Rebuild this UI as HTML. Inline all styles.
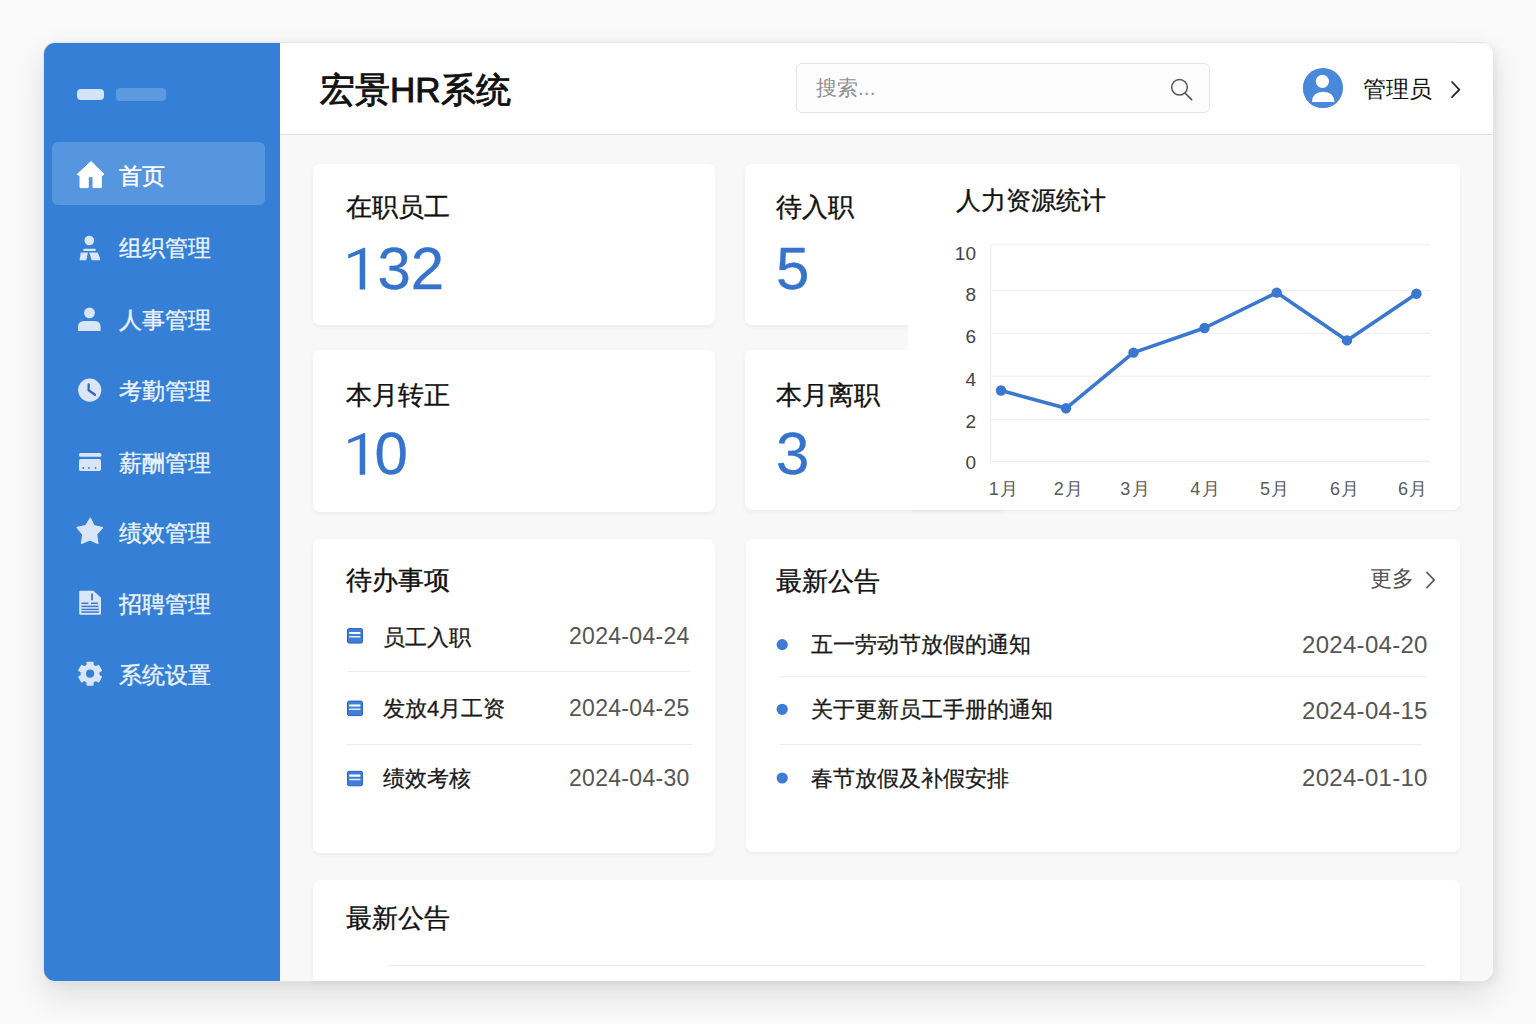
<!DOCTYPE html>
<html><head><meta charset="utf-8">
<style>
*{box-sizing:border-box;margin:0;padding:0}
html,body{width:1536px;height:1024px;overflow:hidden;background:#fafafa;font-family:"Liberation Sans",sans-serif;color:#111;position:relative}
.a{position:absolute;white-space:nowrap}
#win{position:absolute;left:43px;top:42px;width:1451px;height:940px;border-radius:12px;background:#f8f8f8;border:1px solid #e4e4e4;box-shadow:0 14px 34px rgba(0,0,0,0.11),3px 2px 10px rgba(0,0,0,0.05)}
#side{position:absolute;left:44px;top:43px;width:236px;height:938px;background:#3580d6;border-radius:11px 0 0 11px}
#head{position:absolute;left:280px;top:43px;width:1213px;height:92px;background:#fff;border-bottom:1px solid #dedede;border-radius:0 11px 0 0}
.mt{position:absolute;left:119px;color:#edf3fc;font-size:23px;line-height:30px;white-space:nowrap;-webkit-text-stroke:0.35px #edf3fc}
.ic{position:absolute}
.card{position:absolute;background:#fff;border-radius:7px;box-shadow:0 2px 4px rgba(0,0,0,0.05)}
.lbl{position:absolute;font-size:25.5px;line-height:30px;white-space:nowrap;color:#111;-webkit-text-stroke:0.35px #111}
.num{position:absolute;font-size:60px;line-height:61px;color:#3573cc;white-space:nowrap;-webkit-text-stroke:0.3px #3573cc}
.it{position:absolute;font-size:22px;line-height:26px;white-space:nowrap;color:#1a1a1a;-webkit-text-stroke:0.3px #1a1a1a}
.dt{position:absolute;font-size:23px;line-height:26px;white-space:nowrap;color:#555;letter-spacing:0.3px}
.g1{color:transparent;-webkit-text-stroke-color:transparent}
.hr{position:absolute;height:1px;background:#ececec}
</style></head><body>
<div id="win"></div>
<div id="side"></div>
<div id="head"></div>

<!-- logo pills -->
<div class="a" style="left:77px;top:89px;width:27px;height:11px;border-radius:4px;background:#d3e3f8"></div>
<div class="a" style="left:116px;top:88px;width:50px;height:13px;border-radius:4px;background:#5b99e0"></div>
<!-- active -->
<div class="a" style="left:52px;top:142px;width:213px;height:63px;border-radius:6px;background:#5596de"></div>

<!-- menu -->
<div class="mt" style="top:161px;color:#fff;-webkit-text-stroke:0.45px #fff">首页</div>
<div class="mt" style="top:233px">组织管理</div>
<div class="mt" style="top:305px">人事管理</div>
<div class="mt" style="top:376px">考勤管理</div>
<div class="mt" style="top:448px">薪酬管理</div>
<div class="mt" style="top:518px">绩效管理</div>
<div class="mt" style="top:589px">招聘管理</div>
<div class="mt" style="top:660px">系统设置</div>

<!-- header -->
<div class="a" style="left:320px;top:68px;font-size:35px;line-height:44px;font-weight:500;color:#111;-webkit-text-stroke:0.9px #111">宏景HR系统</div>
<div class="a" style="left:796px;top:63px;width:414px;height:50px;border:1px solid #e6e6e6;border-radius:6px;background:#fcfcfc"></div>
<div class="a" style="left:816px;top:75px;font-size:21px;line-height:26px;color:#8f8f8f">搜索...</div>
<div class="a" style="left:1303px;top:68px;width:40px;height:40px;border-radius:50%;background:#4a86d8"></div>
<div class="a" style="left:1363px;top:74px;font-size:23px;line-height:30px;color:#111">管理员</div>

<!-- cards row 1/2 -->
<div class="card" style="left:313px;top:164px;width:402px;height:161px"></div>
<div class="card" style="left:313px;top:350px;width:402px;height:162px"></div>
<div class="card" style="left:745px;top:164px;width:260px;height:161px"></div>
<div class="card" style="left:745px;top:350px;width:260px;height:160px"></div>
<div class="card" style="left:908px;top:164px;width:552px;height:346px;border-radius:0 7px 7px 0;box-shadow:2px 3px 3px -2px rgba(0,0,0,0.06)"></div>

<div class="lbl" style="left:346px;top:192px">在职员工</div>
<div class="num" style="left:344px;top:238px"><span class="g1">1</span>32</div>
<div class="lbl" style="left:346px;top:380px">本月转正</div>
<div class="num" style="left:341px;top:423px"><span class="g1">1</span>0</div>
<div class="lbl" style="left:776px;top:192px">待入职</div>
<div class="num" style="left:776px;top:238px">5</div>
<div class="lbl" style="left:776px;top:380px">本月离职</div>
<div class="num" style="left:776px;top:423px">3</div>

<div class="lbl" style="left:956px;top:186px;font-size:24.5px">人力资源统计</div>

<!-- todo -->
<div class="card" style="left:313px;top:539px;width:402px;height:314px"></div>
<div class="lbl" style="left:346px;top:565px">待办事项</div>
<div class="it" style="left:383px;top:625px">员工入职</div>
<div class="dt" style="left:569px;top:623px">2024-04-24</div>
<div class="hr" style="left:348px;top:671px;width:342px"></div>
<div class="it" style="left:383px;top:696px">发放4月工资</div>
<div class="dt" style="left:569px;top:695px">2024-04-25</div>
<div class="hr" style="left:346px;top:744px;width:346px"></div>
<div class="it" style="left:383px;top:766px">绩效考核</div>
<div class="dt" style="left:569px;top:765px">2024-04-30</div>

<!-- announcements -->
<div class="card" style="left:746px;top:539px;width:714px;height:313px"></div>
<div class="lbl" style="left:776px;top:566px">最新公告</div>
<div class="a" style="left:1370px;top:566px;font-size:22px;line-height:26px;color:#555">更多</div>
<div class="it" style="left:811px;top:632px">五一劳动节放假的通知</div>
<div class="dt" style="left:1302px;top:632px;font-size:24px">2024-04-20</div>
<div class="hr" style="left:780px;top:676px;width:646px"></div>
<div class="it" style="left:811px;top:697px">关于更新员工手册的通知</div>
<div class="dt" style="left:1302px;top:698px;font-size:24px">2024-04-15</div>
<div class="hr" style="left:780px;top:744px;width:642px"></div>
<div class="it" style="left:811px;top:766px">春节放假及补假安排</div>
<div class="dt" style="left:1302px;top:765px;font-size:24px">2024-01-10</div>

<!-- bottom card -->
<div class="card" style="left:313px;top:880px;width:1147px;height:101px;border-radius:8px 8px 0 0"></div>
<div class="lbl" style="left:346px;top:903px">最新公告</div>
<div class="hr" style="left:388px;top:965px;width:1038px"></div>


<svg class="a" style="left:0;top:0" width="1536" height="1024" viewBox="0 0 1536 1024">
<!-- sidebar icons -->
<path d="M91,161.5 L104,174.2 L101.3,176 L101.3,187.6 L93,187.6 L93,176.7 L88.2,176.7 L88.2,187.6 L80,187.6 L80,176 L77.3,174.2 Z" fill="#fff" stroke="#fff" stroke-width="1" stroke-linejoin="round"/>
<g fill="#dae6f7">
<circle cx="89.3" cy="240.5" r="4.8"/>
<rect x="83.2" y="248.8" width="12.6" height="2.3" rx="1"/>
<path d="M80.8,252.4 L87.9,252.4 L86.4,260.2 L79.6,260.2 Z"/>
<path d="M89.1,252.4 L97.4,252.4 Q100.2,256 100.2,260.2 L91.8,260.2 Z"/>
<circle cx="89.5" cy="312.9" r="5.4"/>
<path d="M78,331 L78,327 Q78,321 84,321 L94.6,321 Q100.6,321 100.6,327 L100.6,331 Z"/>
<circle cx="89.7" cy="390.1" r="11.6"/>
<rect x="79" y="453" width="22.4" height="3.8" rx="1.6"/>
<rect x="79" y="459" width="22" height="12.1" rx="1.8"/>
<path d="M90.3,518.3 L93.9,525.8 L102.4,527.8 L96.6,534.3 L97.8,543.3 L89.9,539.8 L81.5,543.3 L82.9,534.5 L77.2,527.5 L85.9,525.6 Z" stroke="#dae6f7" stroke-width="1.4" stroke-linejoin="round"/>
<path d="M80.5,590.8 L93.4,590.8 L101,597.8 L101,613.5 Q101,614.8 99.7,614.8 L80.5,614.8 Q79.2,614.8 79.2,613.5 L79.2,592.1 Q79.2,590.8 80.5,590.8 Z"/>
<path d="M86.33,665.97 L87.44,665.00 L87.29,662.44 L92.91,662.44 L92.76,665.00 L93.87,665.97 L94.91,666.57 L96.31,667.04 L98.44,665.64 L101.25,670.50 L98.97,671.65 L98.68,673.10 L98.68,674.30 L98.97,675.75 L101.25,676.90 L98.44,681.76 L96.31,680.36 L94.91,680.83 L93.87,681.43 L92.76,682.40 L92.91,684.96 L87.29,684.96 L87.44,682.40 L86.33,681.43 L85.29,680.83 L83.89,680.36 L81.76,681.76 L78.95,676.90 L81.23,675.75 L81.52,674.30 L81.52,673.10 L81.23,671.65 L78.95,670.50 L81.76,665.64 L83.89,667.04 L85.29,666.57Z" stroke="#dae6f7" stroke-width="1.6" stroke-linejoin="round"/>
</g>
<path d="M88.7,384.3 L88.6,390.2 L95,394.8" fill="none" stroke="#2c68c4" stroke-width="2.3" stroke-linecap="round" stroke-linejoin="round"/>
<g fill="#3a78d0"><circle cx="83.2" cy="468" r="0.9"/><circle cx="88.8" cy="468" r="0.9"/><circle cx="95.6" cy="468" r="0.9"/></g>
<g stroke="#3a78d0" stroke-width="1.5"><line x1="81.4" y1="603.3" x2="88.5" y2="603.3"/><line x1="91" y1="603.3" x2="98" y2="603.3"/><line x1="81.4" y1="606.4" x2="98.5" y2="606.4"/><line x1="81.4" y1="609.4" x2="98.8" y2="609.4"/><line x1="81.4" y1="612.1" x2="98.8" y2="612.1"/><line x1="92" y1="593.5" x2="92" y2="600.3" stroke-width="1.8"/></g>
<circle cx="90.1" cy="673.7" r="4.1" fill="#3580d6"/>

<path d="M348.2,254.5 L364,247.7 L365.2,247.7 L365.2,289.5 L359.7,289.5 L359.7,253.8 L348.2,258.4 Z" fill="#3573cc"/>
<path d="M348.2,439.7 L364,432.9 L365.2,432.9 L365.2,474.8 L359.7,474.8 L359.7,439 L348.2,443.6 Z" fill="#3573cc"/>
<!-- header icons -->
<circle cx="1179.5" cy="87.2" r="7.8" fill="none" stroke="#555" stroke-width="1.5"/>
<line x1="1185.2" y1="93.2" x2="1191.6" y2="99.6" stroke="#555" stroke-width="1.6" stroke-linecap="round"/>
<circle cx="1322.6" cy="88.3" r="19.6" fill="#4a88dc"/>
<circle cx="1322.4" cy="81.3" r="6.6" fill="#fff"/>
<path d="M1312,102.1 Q1312.5,91.8 1323.2,91.8 Q1333.9,91.8 1334.4,102.1 Z" fill="#fff"/>
<path d="M1452,82 L1459.3,89.6 L1452,97.2" fill="none" stroke="#222" stroke-width="1.7" stroke-linecap="round" stroke-linejoin="round"/>
<path d="M1427,572.5 L1434.2,580 L1427,587.5" fill="none" stroke="#555" stroke-width="1.8" stroke-linecap="round" stroke-linejoin="round"/>

<!-- chart -->
<g stroke="#ededed" stroke-width="1"><line x1="991" y1="244.8" x2="1430" y2="244.8"/><line x1="991" y1="290.4" x2="1430" y2="290.4"/><line x1="991" y1="333.2" x2="1430" y2="333.2"/><line x1="991" y1="376.2" x2="1430" y2="376.2"/><line x1="991" y1="419.7" x2="1430" y2="419.7"/><line x1="991" y1="461.4" x2="1430" y2="461.4"/><line x1="990.6" y1="244.8" x2="990.6" y2="464"/></g>
<g font-family="Liberation Sans, sans-serif" font-size="19" fill="#444"><text x="976" y="259.8" text-anchor="end">10</text><text x="976" y="301.3" text-anchor="end">8</text><text x="976" y="343.1" text-anchor="end">6</text><text x="976" y="385.6" text-anchor="end">4</text><text x="976" y="427.5" text-anchor="end">2</text><text x="976" y="468.7" text-anchor="end">0</text></g>
<g font-family="Liberation Sans, sans-serif" font-size="18" fill="#5a5a5a" letter-spacing="1.5"><text x="1004.2" y="494.5" text-anchor="middle">1月</text><text x="1069.3" y="494.5" text-anchor="middle">2月</text><text x="1135.7" y="494.5" text-anchor="middle">3月</text><text x="1205.8" y="494.5" text-anchor="middle">4月</text><text x="1275.5" y="494.5" text-anchor="middle">5月</text><text x="1345.5" y="494.5" text-anchor="middle">6月</text><text x="1413.5" y="494.5" text-anchor="middle">6月</text></g>
<polyline points="1001,390.5 1066,408.3 1133.5,352.6 1204.5,328 1276.7,292.6 1347,340.4 1416.4,293.7" fill="none" stroke="#3a78d0" stroke-width="3.6" stroke-linejoin="round" stroke-linecap="round"/>
<g fill="#3a78d0"><circle cx="1001" cy="390.5" r="5.2"/><circle cx="1066" cy="408.3" r="5.2"/><circle cx="1133.5" cy="352.6" r="5.2"/><circle cx="1204.5" cy="328" r="5.2"/><circle cx="1276.7" cy="292.6" r="5.2"/><circle cx="1347" cy="340.4" r="5.2"/><circle cx="1416.4" cy="293.7" r="5.2"/></g>

<!-- todo icons -->
<g>
<rect x="347.5" y="628.6" width="15" height="14.5" rx="1.6" fill="#3f7fd9" stroke="#2a62b8" stroke-width="1"/><rect x="349" y="631.9" width="11.5" height="2.1" rx="0.8" fill="#fff"/><rect x="349" y="636.1" width="11.5" height="1.5" rx="0.7" fill="#e3eefc"/>
<rect x="347.5" y="701.1" width="15" height="14.5" rx="1.6" fill="#3f7fd9" stroke="#2a62b8" stroke-width="1"/><rect x="349" y="704.4" width="11.5" height="2.1" rx="0.8" fill="#fff"/><rect x="349" y="708.6" width="11.5" height="1.5" rx="0.7" fill="#e3eefc"/>
<rect x="347.5" y="771.3" width="15" height="14.5" rx="1.6" fill="#3f7fd9" stroke="#2a62b8" stroke-width="1"/><rect x="349" y="774.5999999999999" width="11.5" height="2.1" rx="0.8" fill="#fff"/><rect x="349" y="778.8" width="11.5" height="1.5" rx="0.7" fill="#e3eefc"/>
</g>
<g fill="#3d7bd6"><circle cx="782.2" cy="644.6" r="5.6"/><circle cx="782.2" cy="709.3" r="5.6"/><circle cx="782.2" cy="778" r="5.6"/></g>
</svg>
</body></html>
